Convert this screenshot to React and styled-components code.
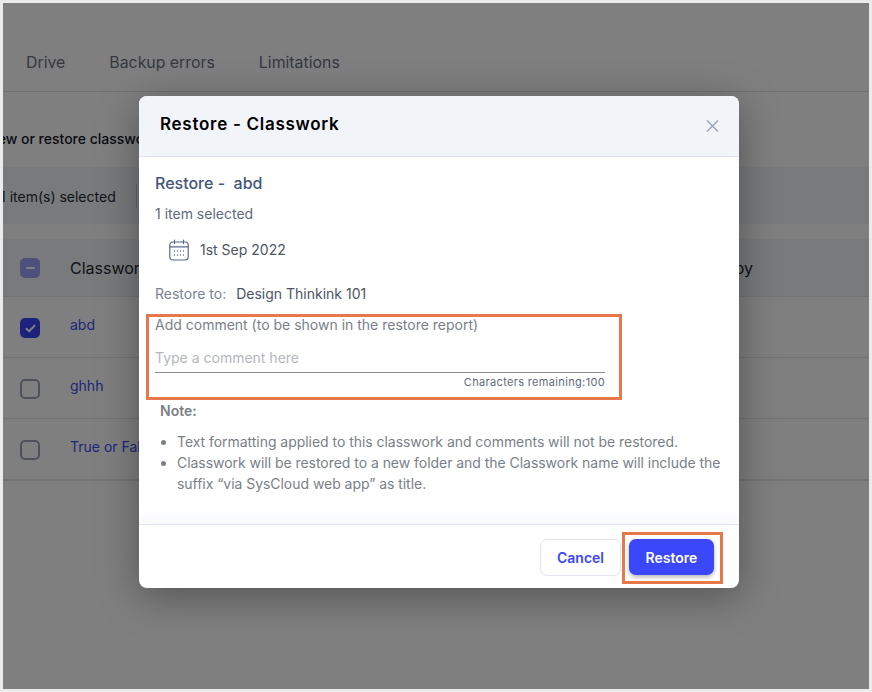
import styled, { createGlobalStyle } from 'styled-components'

const GlobalStyle = createGlobalStyle`
  html, body {
    margin: 0;
    padding: 0;
    background: #ebebeb;
  }

  body {
    font-family: Inter, "Liberation Sans", sans-serif;
  }
`

const Frame = styled.div`
  box-sizing: border-box;
  width: 872px;
  height: 692px;
  padding: 3px;
  background: #ebebeb;
`

const Page = styled.div`
  position: relative;
  height: 686px;
  overflow: hidden;
  background: #fff;
`

const Tabs = styled.div`
  display: flex;
  gap: 44px;
  height: 89px;
  box-sizing: border-box;
  padding: 50px 0 0 23px;
  border-bottom: 1px solid #dfe1e6;
  font-size: 15.85px;
  line-height: 20px;
  color: #6b7280;
`

const Intro = styled.div`
  height: 75px;
  box-sizing: border-box;
  padding-top: 37px;
  margin-left: -39px;
  font-size: 14px;
  line-height: 20px;
  font-weight: 500;
  color: #111827;
  white-space: nowrap;
`

const SelectionBar = styled.div`
  display: flex;
  align-items: center;
  box-sizing: border-box;
  height: 57px;
  padding-top: 2px;
  background: #f1f4f9;
  font-size: 14px;
  color: #1f2937;
`

const Count = styled.span`
  margin-left: -3px;
  padding-right: 20px;
  border-right: 1px solid #c9ced6;
  line-height: 25px;
`

const Table = styled.div`
  margin-top: 15px;
  border-bottom: 2px solid #e4e6eb;
`

const HeaderRow = styled.div`
  display: flex;
  align-items: center;
  box-sizing: border-box;
  height: 58px;
  padding: 1px 0 0 17px;
  background: #f1f4f9;
  border-bottom: 1px solid #e4e6eb;
  font-size: 16px;
  color: #1f2937;
`

const Row = styled.div`
  display: flex;
  align-items: center;
  height: 60px;
  padding-left: 17px;
  border-bottom: ${({ $last }) => ($last ? 'none' : '1px solid #e4e6eb')};
  font-size: 14px;
  color: #3d4df5;
`

const RowLabel = styled.span`
  margin-bottom: 5px;
`

const CheckBox = styled.span`
  display: flex;
  align-items: center;
  justify-content: center;
  width: 20px;
  height: 20px;
  margin: ${({ $inBody }) => ($inBody ? '2px' : '0')} 30px 0 0;
  border-radius: 5px;
  box-sizing: border-box;
  background: ${({ $state }) => ($state === 'checked' ? '#3a47fb' : $state === 'mixed' ? '#9aa0f5' : '#fff')};
  border: ${({ $state }) => ($state === 'empty' ? '2px solid #99a3b5' : 'none')};
`

const ByLabel = styled.span`
  margin: 0 116px 0 auto;
`

const Backdrop = styled.div`
  position: absolute;
  inset: 0;
  background: rgba(0, 0, 0, 0.5);
`

const Modal = styled.div`
  position: absolute;
  top: 93px;
  left: 136px;
  width: 600px;
  height: 492px;
  display: flex;
  flex-direction: column;
  overflow: hidden;
  border-radius: 8px;
  background: #fff;
  box-shadow: 0 8px 40px rgba(0, 0, 0, 0.35);
`

const ModalHeader = styled.div`
  display: flex;
  align-items: center;
  justify-content: space-between;
  flex: none;
  box-sizing: border-box;
  height: 61px;
  padding: 0 20px 4px 21px;
  background: #f1f4f9;
  border-bottom: 1px solid #e2e6ee;
`

const ModalTitle = styled.h2`
  margin: 0;
  font-size: 17px;
  line-height: 20px;
  font-weight: 600;
  letter-spacing: 0.72px;
  color: #000;
`

const CloseButton = styled.button`
  display: flex;
  padding: 0;
  margin-top: 4px;
  border: none;
  background: none;
  color: #9aa5b8;
`

const ModalBody = styled.div`
  flex: 1;
  padding: 0 134px 0 16px;
`

const Subtitle = styled.div`
  margin-top: 16px;
  font-size: 16px;
  line-height: 20px;
  font-weight: 500;
  color: #44557a;
  white-space: pre;
`

const Selected = styled.div`
  margin-top: 11px;
  font-size: 14px;
  line-height: 20px;
  color: #5f6b7a;
`

const DateRow = styled.div`
  display: flex;
  align-items: center;
  gap: 11px;
  margin: 14px 0 0 14px;
  font-size: 14px;
  line-height: 24px;
  color: #4b5563;
`

const TargetRow = styled.div`
  display: flex;
  gap: 10px;
  margin-top: 22px;
  font-size: 14px;
  line-height: 20px;
`

const TargetLabel = styled.span`
  color: #7a8391;
`

const TargetName = styled.span`
  color: #4b5563;
`

const CommentBox = styled.div`
  position: relative;
  margin-top: 11px;
`

const Callout = styled.div`
  position: absolute;
  pointer-events: none;
  border: 3px solid #e8774a;
  box-sizing: border-box;
  inset: ${({ $inset }) => $inset};
`

const CommentLabel = styled.label`
  display: block;
  font-size: 14px;
  line-height: 20px;
  color: #7a7f87;
`

const CommentInput = styled.input`
  display: block;
  box-sizing: border-box;
  width: 100%;
  height: 35px;
  margin-top: 3px;
  padding: 4px 0 0;
  border: none;
  border-bottom: 1px solid #8a8d91;
  outline: none;
  font: 14px Inter, "Liberation Sans", sans-serif;

  &::placeholder {
    color: #b3b7bd;
  }
`

const Remaining = styled.div`
  margin-top: 1px;
  text-align: right;
  font-size: 11px;
  line-height: 16px;
  letter-spacing: 0.34px;
  color: #5f6b7a;
`

const NoteTitle = styled.div`
  margin: 11px 0 0 5px;
  font-size: 14px;
  line-height: 20px;
  font-weight: 600;
  color: #7a7f87;
`

const NoteList = styled.ul`
  width: 576px;
  margin: 10px 0 0;
  padding-left: 22px;
  box-sizing: border-box;
  font-size: 14px;
  line-height: 21px;
  letter-spacing: -0.04px;
  color: #7a7f87;
`

const ModalFooter = styled.div`
  display: flex;
  align-items: center;
  justify-content: flex-end;
  gap: 8px;
  flex: none;
  box-sizing: border-box;
  height: 64px;
  padding: 1px 25px 0 0;
  border-top: 1px solid #e2e4f0;
  box-shadow: 0 -6px 10px rgba(226, 228, 240, 0.3);
`

const Button = styled.button`
  position: relative;
  width: ${({ $primary }) => ($primary ? '85px' : '81px')};
  height: ${({ $primary }) => ($primary ? '36px' : '37px')};
  padding: 0;
  border-radius: 7px;
  border: ${({ $primary }) => ($primary ? 'none' : '1px solid #e2e4f0')};
  background: ${({ $primary }) => ($primary ? '#3a47fb' : '#fff')};
  box-shadow: ${({ $primary }) => ($primary ? '0 2px 4px rgba(0, 0, 0, 0.3)' : 'none')};
  color: ${({ $primary }) => ($primary ? '#fff' : '#3a47fb')};
  font: 600 14px Inter, "Liberation Sans", sans-serif;
`

const CalendarIcon = () => (
  <svg width="20" height="22" viewBox="0 0 20 22" fill="none" stroke="#5a6b8a" strokeWidth="1.2" strokeLinecap="round">
    <rect x="0.8" y="3" width="18.4" height="18" rx="3" />
    <path d="M0.8 7.8h18.4M5.5 1v3.6M14.5 1v3.6" />
    <path d="M5.5 12h.01M8.5 12h.01M11.5 12h.01M14.5 12h.01M5.5 16h.01M8.5 16h.01M11.5 16h.01M14.5 16h.01" strokeWidth="1.4" />
  </svg>
)

const App = () => (
  <Frame>
    <GlobalStyle />
    <Page>
      <Tabs>
        <span>Drive</span>
        <span>Backup errors</span>
        <span>Limitations</span>
      </Tabs>
      <Intro>Preview or restore classwork</Intro>
      <SelectionBar>
        <Count>1 item(s) selected</Count>
      </SelectionBar>
      <Table>
        <HeaderRow>
          <CheckBox $state="mixed">
            <svg width="9" height="2" viewBox="0 0 9 2"><rect width="9" height="2" rx="1" fill="#fff" /></svg>
          </CheckBox>
          Classwork
          <ByLabel>by</ByLabel>
        </HeaderRow>
        <Row>
          <CheckBox $inBody $state="checked">
            <svg width="11" height="9" viewBox="0 0 11 9" fill="none" stroke="#fff" strokeWidth="2" strokeLinecap="round" strokeLinejoin="round"><path d="M1.5 4.8 4.2 7.3 9.5 1.6" /></svg>
          </CheckBox>
          <RowLabel>abd</RowLabel>
        </Row>
        <Row>
          <CheckBox $inBody $state="empty" />
          <RowLabel>ghhh</RowLabel>
        </Row>
        <Row $last>
          <CheckBox $inBody $state="empty" />
          <RowLabel>True or False</RowLabel>
        </Row>
      </Table>
      <Backdrop />
      <Modal>
        <ModalHeader>
          <ModalTitle>Restore - Classwork</ModalTitle>
          <CloseButton aria-label="Close">
            <svg width="13" height="14" viewBox="0 0 13 14" fill="none" stroke="currentColor" strokeWidth="1.5"><path d="M1 1.5l11 11M12 1.5l-11 11" /></svg>
          </CloseButton>
        </ModalHeader>
        <ModalBody>
          <Subtitle>{'Restore -  abd'}</Subtitle>
          <Selected>1 item selected</Selected>
          <DateRow>
            <CalendarIcon />
            1st Sep 2022
          </DateRow>
          <TargetRow>
            <TargetLabel>Restore to:</TargetLabel>
            <TargetName>Design Thinkink 101</TargetName>
          </TargetRow>
          <CommentBox>
            <Callout $inset="-1px -17px -10px -9px" />
            <CommentLabel>Add comment (to be shown in the restore report)</CommentLabel>
            <CommentInput placeholder="Type a comment here" />
            <Remaining>Characters remaining:100</Remaining>
          </CommentBox>
          <NoteTitle>Note:</NoteTitle>
          <NoteList>
            <li>Text formatting applied to this classwork and comments will not be restored.</li>
            <li>Classwork will be restored to a new folder and the Classwork name will include the suffix “via SysCloud web app” as title.</li>
          </NoteList>
        </ModalBody>
        <ModalFooter>
          <Button>Cancel</Button>
          <Button $primary>
            <Callout $inset="-7px -9px -9px -7px" />
            Restore
          </Button>
        </ModalFooter>
      </Modal>
    </Page>
  </Frame>
)

export default App
